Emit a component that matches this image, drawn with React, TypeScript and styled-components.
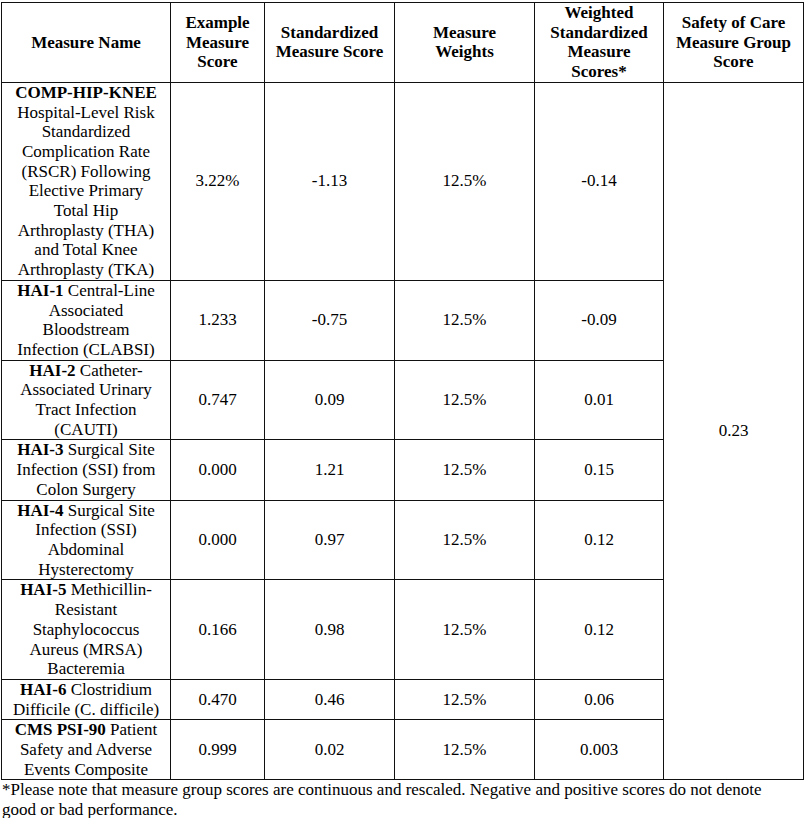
import React from "react";
import styled, { createGlobalStyle } from "styled-components";

const GlobalStyle = createGlobalStyle`
  html, body {
    margin: 0;
    padding: 0;
    background: #ffffff;
  }
  body {
    font-family: "Liberation Serif", "Times New Roman", serif;
    color: #000000;
  }
`;

const Page = styled.div`
  padding: 2px 0 0 1px;
  width: 805px;
`;

const Table = styled.table`
  border-collapse: collapse;
  table-layout: fixed;
  width: 802px;
  font-size: 17px;
  line-height: 19.7px;
`;

const Col = styled.col<{ $w: number }>`
  width: ${(p) => p.$w}px;
`;

const HeadCell = styled.th`
  border: 1px solid #111111;
  padding: 0 4px;
  font-weight: bold;
  text-align: center;
  vertical-align: middle;
`;

const Cell = styled.td`
  border: 1px solid #111111;
  padding: 0 4px;
  font-weight: normal;
  text-align: center;
  vertical-align: middle;
`;

const Line = styled.span`
  display: block;
  white-space: nowrap;
`;

const Code = styled.b`
  font-weight: bold;
`;

const Footnote = styled.p`
  margin: 0;
  padding-left: 1px;
  font-size: 17px;
  line-height: 20px;
  width: 785px;
`;

type Row = {
  code: string;
  lines: string[];
  example: string;
  standardized: string;
  weight: string;
  weighted: string;
};

const rows: Row[] = [
  {
    code: "COMP-HIP-KNEE",
    lines: [
      "",
      "Hospital-Level Risk",
      "Standardized",
      "Complication Rate",
      "(RSCR) Following",
      "Elective Primary",
      "Total Hip",
      "Arthroplasty (THA)",
      "and Total Knee",
      "Arthroplasty (TKA)",
    ],
    example: "3.22%",
    standardized: "-1.13",
    weight: "12.5%",
    weighted: "-0.14",
  },
  {
    code: "HAI-1",
    lines: ["Central-Line", "Associated", "Bloodstream", "Infection (CLABSI)"],
    example: "1.233",
    standardized: "-0.75",
    weight: "12.5%",
    weighted: "-0.09",
  },
  {
    code: "HAI-2",
    lines: ["Catheter-", "Associated Urinary", "Tract Infection", "(CAUTI)"],
    example: "0.747",
    standardized: "0.09",
    weight: "12.5%",
    weighted: "0.01",
  },
  {
    code: "HAI-3",
    lines: ["Surgical Site", "Infection (SSI) from", "Colon Surgery"],
    example: "0.000",
    standardized: "1.21",
    weight: "12.5%",
    weighted: "0.15",
  },
  {
    code: "HAI-4",
    lines: ["Surgical Site", "Infection (SSI)", "Abdominal", "Hysterectomy"],
    example: "0.000",
    standardized: "0.97",
    weight: "12.5%",
    weighted: "0.12",
  },
  {
    code: "HAI-5",
    lines: ["Methicillin-", "Resistant", "Staphylococcus", "Aureus (MRSA)", "Bacteremia"],
    example: "0.166",
    standardized: "0.98",
    weight: "12.5%",
    weighted: "0.12",
  },
  {
    code: "HAI-6",
    lines: ["Clostridium", "Difficile (C. difficile)"],
    example: "0.470",
    standardized: "0.46",
    weight: "12.5%",
    weighted: "0.06",
  },
  {
    code: "CMS PSI-90",
    lines: ["Patient", "Safety and Adverse", "Events Composite"],
    example: "0.999",
    standardized: "0.02",
    weight: "12.5%",
    weighted: "0.003",
  },
];

const widths = [169, 94, 130, 140, 129, 140];

function MeasureName({ code, lines }: { code: string; lines: string[] }) {
  const [first, ...rest] = lines;
  return (
    <>
      <Line>
        <Code>{code}</Code>
        {first ? ` ${first}` : ""}
      </Line>
      {rest.map((l, i) => (
        <Line key={i}>{l}</Line>
      ))}
    </>
  );
}

export default function App() {
  return (
    <>
      <GlobalStyle />
      <Page>
        <Table>
          <colgroup>
            {widths.map((w, i) => (
              <Col key={i} $w={w} />
            ))}
          </colgroup>
          <thead>
            <tr>
              <HeadCell>Measure Name</HeadCell>
              <HeadCell>
                <Line>Example</Line>
                <Line>Measure</Line>
                <Line>Score</Line>
              </HeadCell>
              <HeadCell>
                <Line>Standardized</Line>
                <Line>Measure Score</Line>
              </HeadCell>
              <HeadCell>
                <Line>Measure</Line>
                <Line>Weights</Line>
              </HeadCell>
              <HeadCell>
                <Line>Weighted</Line>
                <Line>Standardized</Line>
                <Line>Measure</Line>
                <Line>Scores*</Line>
              </HeadCell>
              <HeadCell>
                <Line>Safety of Care</Line>
                <Line>Measure Group</Line>
                <Line>Score</Line>
              </HeadCell>
            </tr>
          </thead>
          <tbody>
            {rows.map((r, i) => (
              <tr key={r.code}>
                <Cell>
                  <MeasureName code={r.code} lines={r.lines} />
                </Cell>
                <Cell>{r.example}</Cell>
                <Cell>{r.standardized}</Cell>
                <Cell>{r.weight}</Cell>
                <Cell>{r.weighted}</Cell>
                {i === 0 && <Cell rowSpan={rows.length}>0.23</Cell>}
              </tr>
            ))}
          </tbody>
        </Table>
        <Footnote>
          *Please note that measure group scores are continuous and rescaled. Negative and positive
          scores do not denote good or bad performance.
        </Footnote>
      </Page>
    </>
  );
}
